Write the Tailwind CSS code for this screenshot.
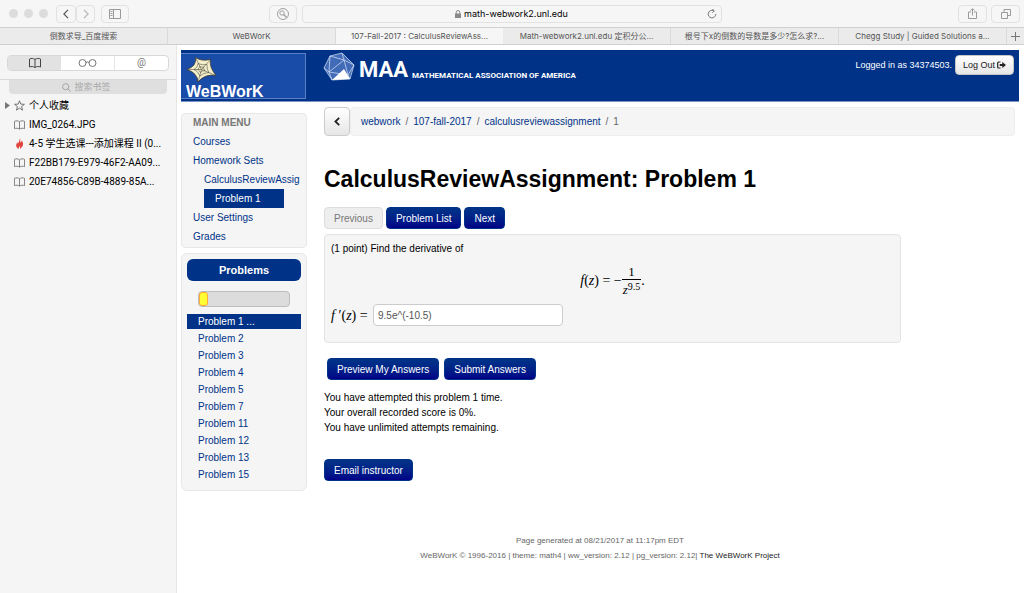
<!DOCTYPE html>
<html lang="en">
<head>
    <meta charset="UTF-8">
    <meta name="viewport" content="width=device-width, initial-scale=1.0">
    <title>CalculusReviewAssignment: Problem 1</title>
    <script src="https://cdn.jsdelivr.net/npm/@tailwindcss/browser@4"></script>
</head>
<body class="flex flex-col min-h-screen bg-white text-black text-[11px] leading-[15px] font-['Liberation_Sans','Noto_Sans_CJK_SC',sans-serif]">
    <!-- Browser toolbar -->
    <header class="flex items-center h-7 bg-[#f6f6f6] border-b border-[#d0d0d0] font-['Inter','Noto_Sans_CJK_SC',sans-serif]">
        <div class="flex gap-[6px] ml-[9px]">
            <span class="size-[9px] rounded-full bg-[#dcdcdc]"></span>
            <span class="size-[9px] rounded-full bg-[#dcdcdc]"></span>
            <span class="size-[9px] rounded-full bg-[#dcdcdc]"></span>
        </div>
        <div class="flex ml-2">
            <button type="button" aria-label="Back" class="flex items-center justify-center w-5 h-[18px] rounded border border-[#e2e2e2]">
                <svg class="w-[6px] h-[10px]" viewBox="0 0 6 10" fill="none" stroke="#555" stroke-width="1.2"><path d="M5 .8.9 5 5 9.2"/></svg>
            </button>
            <button type="button" aria-label="Forward" class="flex items-center justify-center w-[19px] h-[18px] rounded border border-[#e2e2e2]">
                <svg class="w-[6px] h-[10px]" viewBox="0 0 6 10" fill="none" stroke="#b5b5b5" stroke-width="1.2"><path d="M1 .8 5.1 5 1 9.2"/></svg>
            </button>
        </div>
        <button type="button" aria-label="Sidebar" class="flex items-center justify-center w-7 h-[18px] ml-[6px] rounded border border-[#e2e2e2]">
            <svg class="w-3 h-[10px]" viewBox="0 0 12 10" fill="none" stroke="#9a9a9a"><path d="M.5.5h11v9H.5zM4.5.5v9M1.5 2.5h2M1.5 4.5h2M1.5 6.5h2"/></svg>
        </button>
        <div class="flex flex-1 justify-center">
            <button type="button" aria-label="Find" class="flex items-center justify-center w-7 h-[18px] ml-[60px] mr-[5px] rounded border border-[#e2e2e2]">
                <svg class="size-3" viewBox="0 0 12 12" fill="none" stroke="#a0a0a0"><circle cx="6" cy="6" r="5.5"/><circle cx="5" cy="5" r="2.2"/><path d="m6.6 6.6 3 3" stroke-width="1.4"/></svg>
            </button>
            <div class="relative flex items-center justify-center w-[420px] h-[18px] rounded border border-[#e2e2e2]">
                <svg class="w-[6px] h-2 mr-[3px]" viewBox="0 0 6 8"><path d="M0 3.5h6V8H0z" fill="#8a8a8a"/><path d="M1.2 4V2.3a1.8 1.8 0 0 1 3.6 0V4" fill="none" stroke="#8a8a8a"/></svg>
                <span class="text-[9px]">math-webwork2.unl.edu</span>
                <button type="button" aria-label="Reload" class="absolute right-1 top-[3px]">
                    <svg class="size-[10px]" viewBox="0 0 10 10" fill="none" stroke="#777"><path d="M8.8 5A3.8 3.8 0 1 1 6.5 1.6"/><path d="M5.2 0 7.3 1.8 5.4 3.8"/></svg>
                </button>
            </div>
        </div>
        <div class="flex gap-1 ml-[157px] mr-1">
            <button type="button" aria-label="Share" class="flex items-center justify-center w-[29px] h-[18px] rounded border border-[#e2e2e2]">
                <svg class="w-[9px] h-[11px]" viewBox="0 0 9 11" fill="none" stroke="#9a9a9a"><path d="M3 4H.5v6.5h8V4H6M4.500 7.500V.8M2.500 2.700l2-2 2 2"/></svg>
            </button>
            <button type="button" aria-label="Tabs" class="flex items-center justify-center w-[29px] h-[18px] rounded border border-[#e2e2e2]">
                <svg class="w-[10px] h-[10px]" viewBox="0 0 10 10" fill="none" stroke="#9a9a9a"><path d="M.5 3.500h6v6h-6zM3 3V.5h6.500v6H7"/></svg>
            </button>
        </div>
    </header>

    <!-- Tabs -->
    <nav class="flex h-[17px] bg-[#ebebeb] border-b border-[#cfcfcf] text-[8px] leading-4 text-center text-[#555] font-['Inter','Noto_Sans_CJK_SC',sans-serif]">
        <a href="#" class="flex-1 border-r border-[#dadada]">倒数求导_百度搜索</a>
        <a href="#" class="flex-1 border-r border-[#dadada]">WeBWorK</a>
        <a href="#" class="flex-1 bg-[#f6f6f6]">107-Fall-2017 : CalculusReviewAss...</a>
        <a href="#" class="flex-1 border-r border-[#dadada]">Math-webwork2.unl.edu 定积分公...</a>
        <a href="#" class="flex-1 border-r border-[#dadada]">根号下x的倒数的导数是多少?怎么求?...</a>
        <a href="#" class="flex-1 border-r border-[#dadada]">Chegg Study | Guided Solutions a...</a>
        <button type="button" aria-label="New tab" class="flex items-center justify-center w-[17px]">
            <svg class="size-[9px]" viewBox="0 0 9 9" stroke="#777"><path d="M4.500 0v9M0 4.500h9"/></svg>
        </button>
    </nav>

    <div class="flex flex-1">
        <!-- Bookmarks -->
        <aside class="w-[177px] shrink-0 bg-[#f5f5f5] border-r border-[#e6e6e6] font-['Roboto','Noto_Sans_CJK_SC',sans-serif]">
            <div class="h-[35px] pt-[10px] px-[7px] border-b border-[#d9d9d9]">
                <div class="flex h-4 rounded border border-[#d8d8d8] bg-white overflow-hidden">
                    <button type="button" aria-label="Bookmarks" class="flex flex-1 items-center justify-center bg-[#e2e2e2]">
                        <svg class="w-3 h-[10px]" viewBox="0 0 12 10" fill="none" stroke="#444"><path d="M6 1.500C4.500.2 2 .2.500 1v8c1.500-.7 4-.7 5.500.5C7.500 8.300 10 8.300 11.500 9V1C10 .2 7.500.2 6 1.500v8"/></svg>
                    </button>
                    <button type="button" aria-label="Reading list" class="flex flex-1 items-center justify-center">
                        <svg class="w-[19px] h-2" viewBox="0 0 19 8" fill="none" stroke="#777"><circle cx="4.500" cy="4" r="3.500"/><circle cx="14.500" cy="4" r="3.500"/><path d="M8 3.500q1.500-1.200 3 0"/></svg>
                    </button>
                    <button type="button" aria-label="Shared links" class="flex-1 border-l border-[#e6e6e6] text-[10px] leading-3 text-[#777]">@</button>
                </div>
            </div>
            <div class="flex items-center justify-center h-[14px] mx-[9px] rounded-b bg-[#dfdfdf]">
                <svg class="size-[9px] mr-1 shrink-0" viewBox="0 0 9 9" fill="none" stroke="#a5a5a5"><circle cx="3.700" cy="3.700" r="3.100"/><path d="m6 6 2.700 2.700"/></svg>
                <input type="text" aria-label="搜索书签" placeholder="搜索书签" class="w-10 h-[14px] text-[9px] placeholder:text-[#aaa]">
            </div>
            <ul class="mt-[2px] text-[10px] leading-[19px] whitespace-nowrap">
                <li class="flex items-center h-[19px] pl-[5px]">
                    <svg class="w-[5px] h-[7px] mr-1" viewBox="0 0 5 7" fill="#777"><path d="M0 0v7l5-3.500z"/></svg>
                    <svg class="size-[11px] mr-1" viewBox="0 0 11 11" fill="none" stroke="#555" stroke-width=".8"><path d="m5.500.8 1.300 3.300 3.600.2-2.800 2.300.9 3.500-3-2-3 2 .9-3.500L.6 4.300l3.600-.2z"/></svg>
                    <a href="#">个人收藏</a>
                </li>
                <li class="flex items-center h-[19px] pl-[14px]">
                    <svg class="w-[11px] h-[10px] mr-1" viewBox="0 0 12 10" fill="none" stroke="#777"><path d="M6 1.500C4.500.2 2 .2.500 1v8c1.500-.7 4-.7 5.500.5C7.500 8.300 10 8.300 11.500 9V1C10 .2 7.500.2 6 1.500v8"/></svg>
                    <a href="#">IMG_0264.JPG</a>
                </li>
                <li class="flex items-center h-[19px] pl-[14px]">
                    <svg class="w-[11px] h-[11px] mr-1" viewBox="0 0 11 11" fill="#e0443e"><path d="M6 0c.7 2-.3 3 .6 4.600C7.600 4.200 7.500 3.200 7.400 2.600 9.200 4.200 9.500 6 8.800 7.600 8.200 9.300 6.800 10 6 11c0-1.500.2-2-.4-3-.6 1.300-1 1.600-.8 3C3 10.200 1.800 8.700 2.200 6.800 2.400 5.800 3 5 3.200 4.200c.5.500.6 1 .6 1.600C5 4 5.700 2 6 0z"/></svg>
                    <a href="#">4-5 学生选课---添加课程 II (0...</a>
                </li>
                <li class="flex items-center h-[19px] pl-[14px]">
                    <svg class="w-[11px] h-[10px] mr-1" viewBox="0 0 12 10" fill="none" stroke="#777"><path d="M6 1.500C4.500.2 2 .2.500 1v8c1.500-.7 4-.7 5.500.5C7.500 8.300 10 8.300 11.500 9V1C10 .2 7.500.2 6 1.500v8"/></svg>
                    <a href="#">F22BB179-E979-46F2-AA09...</a>
                </li>
                <li class="flex items-center h-[19px] pl-[14px]">
                    <svg class="w-[11px] h-[10px] mr-1" viewBox="0 0 12 10" fill="none" stroke="#777"><path d="M6 1.500C4.500.2 2 .2.500 1v8c1.500-.7 4-.7 5.500.5C7.500 8.300 10 8.300 11.500 9V1C10 .2 7.500.2 6 1.500v8"/></svg>
                    <a href="#">20E74856-C89B-4889-85A...</a>
                </li>
            </ul>
        </aside>

        <!-- WeBWorK page -->
        <div class="flex-1 min-w-0 pl-1 pr-[5px] pt-[5px]">
            <div class="flex h-[52px] bg-[#038] border-b border-[#7b93c4] text-white">
                <a href="#" class="flex flex-col w-[125px] h-[46px] mt-[3px] pl-[5px] bg-[#194ba9] border border-l-0 border-[#5c80c4]">
                    <svg class="w-[34px] h-7 mt-[2px] shrink-0" viewBox="0 0 34 28" fill="#f3eecb" stroke="#3c3a30" stroke-width=".8"><path d="M9.500 1.500Q15 5.500 24.500 3.500 23 11 30 19.500 19 17.500 12 26 11.500 17 1 13.500 11 10 9.500 1.500z"/><path d="m9.500 1.500 6 12 9-10M1 13.500h14.500l14.500 6M15.500 13.500 12 26M12 7.500q4 2 9 1-.5 5 2 8-5.500 0-9 3.500Q12 15 8 13.500q4-2 4-6zM13.500 10.500q2 1 4 .5 0 2 1.500 3.500-2.600 0-4.500 2-1-2-3-3 2-1 2-3z" fill="none" stroke-width=".5"/></svg>
                    <span class="text-[16px] leading-[16px] font-bold">WeBWorK</span>
                </a>
                <a href="#" class="flex h-9 ml-[17px]">
                    <svg class="w-[32px] h-[30px] mt-[2px]" viewBox="0 0 32 30" fill="#426bb7" stroke="#c7d5f0" stroke-width=".8"><path d="M1 16 7 4l12-3 12 12-4 14-18 1z"/><path d="M7 4l-1 16-5-4M7 4l14 4-2-7M21 8l10 5-6 10L21 8 6 20l3 8M6 20l19 3 2 4" fill="none"/><path d="m9 28 12-11 6 10z" fill="#fff" stroke="none"/></svg>
                    <span class="ml-1 mt-[5px] text-[22px] leading-[30px] font-bold font-['Roboto',sans-serif]">MAA</span>
                    <span class="ml-1 mt-[19px] text-[8px] leading-[14px] font-bold font-['Roboto',sans-serif]">MATHEMATICAL ASSOCIATION OF AMERICA</span>
                </a>
                <div class="flex items-start ml-auto mr-[5px] pt-[5px] text-[9px]">
                    <span class="mr-[3px] mt-[3px]">Logged in as 34374503.</span>
                    <button type="button" class="flex items-center h-5 px-[7px] rounded-sm border border-[#c5c5c5] bg-linear-to-b from-white to-[#e6e6e6] text-[#222]">Log Out
                        <svg class="w-[9px] h-2 ml-[2px]" viewBox="0 0 9 8"><path d="M3.500 1H1.500Q.7 1 .7 2v4q0 1 .8 1h2" fill="none" stroke="#222" stroke-width="1.200"/><path d="M2.700 2.900h2.600V.9L9 4 5.300 7.100v-2H2.700z" fill="#222"/></svg>
                    </button>
                </div>
            </div>

            <div class="flex">
                <div class="w-[126px] shrink-0 pt-[11px] text-[10px] text-[#038]">
                    <nav class="h-[135px] pl-[11px] rounded-sm border border-[#e8e8e8] bg-[#f5f5f5] leading-[19px] overflow-hidden">
                        <h2 class="leading-[18px] font-bold text-[#777]">MAIN MENU</h2>
                        <ul>
                            <li><a href="#">Courses</a></li>
                            <li><a href="#">Homework Sets</a>
                                <ul class="pl-[11px]">
                                    <li><a href="#">CalculusReviewAssig</a></li>
                                    <li><a href="#" class="block w-20 pl-[11px] bg-[#038] text-white">Problem 1</a></li>
                                </ul>
                            </li>
                            <li><a href="#">User Settings</a></li>
                            <li><a href="#">Grades</a></li>
                        </ul>
                    </nav>
                    <div class="mt-[5px] px-[5px] pt-[5px] pb-[7px] rounded-md border border-[#e8e8e8] bg-[#f5f5f5]">
                        <h2 class="h-[22px] rounded-md bg-[#038] text-[11px] leading-[22px] font-bold text-center text-white">Problems</h2>
                        <div class="h-4 mt-[10px] mx-[11px] rounded border border-[#bdbdbd] bg-[#dcdcdc]">
                            <div class="w-[9px] h-[14px] rounded-[3px] border border-[#fa3] bg-[#ff3]"></div>
                        </div>
                        <ul class="mt-[7px] leading-[17px]">
                            <li><a href="#" class="block h-[15px] pl-[11px] leading-[15px] mb-[1px] bg-[#038] text-white">Problem 1 ...</a></li>
                            <li class="pl-[11px]"><a href="#">Problem 2</a></li>
                            <li class="pl-[11px]"><a href="#">Problem 3</a></li>
                            <li class="pl-[11px]"><a href="#">Problem 4</a></li>
                            <li class="pl-[11px]"><a href="#">Problem 5</a></li>
                            <li class="pl-[11px]"><a href="#">Problem 7</a></li>
                            <li class="pl-[11px]"><a href="#">Problem 11</a></li>
                            <li class="pl-[11px]"><a href="#">Problem 12</a></li>
                            <li class="pl-[11px]"><a href="#">Problem 13</a></li>
                            <li class="pl-[11px]"><a href="#">Problem 15</a></li>
                        </ul>
                    </div>
                </div>

                <main class="flex-1 min-w-0 ml-[17px] mr-1 pt-[5px] text-[10px]">
                    <div class="flex">
                        <a href="#" aria-label="Up" class="flex items-center justify-center w-[26px] h-[29px] rounded-sm border border-[#ccc] bg-linear-to-b from-white to-[#e6e6e6]">
                            <svg class="w-[6px] h-[9px]" viewBox="0 0 6 9" fill="none" stroke="#222" stroke-width="1.800"><path d="M5.200.8 1.400 4.500l3.800 3.700"/></svg>
                        </a>
                        <div class="flex flex-1 items-center gap-[5px] h-[29px] pl-[10px] rounded-sm border border-[#eee] bg-[#f5f5f5] text-[#666]">
                            <a href="#" class="text-[#038]">webwork</a><span>/</span>
                            <a href="#" class="text-[#038]">107-fall-2017</a><span>/</span>
                            <a href="#" class="text-[#038]">calculusreviewassignment</a><span>/</span>
                            <span>1</span>
                        </div>
                    </div>
                    <h1 class="mt-7 text-[23px] leading-[30px] font-bold">CalculusReviewAssignment: Problem 1</h1>
                    <div class="flex gap-[3px] mt-[13px]">
                        <button type="button" disabled class="h-[22px] px-[9px] rounded-sm border border-[#ddd] bg-[#eee] text-[#777]">Previous</button>
                        <button type="button" class="h-[22px] px-[9px] rounded-sm border border-[#038] bg-linear-to-b from-[#038] to-[#008] text-white">Problem List</button>
                        <button type="button" class="h-[22px] px-[9px] rounded-sm border border-[#038] bg-linear-to-b from-[#038] to-[#008] text-white">Next</button>
                    </div>

                    <form>
                        <div class="max-w-[577px] mt-[5px] px-[6px] pt-[6px] pb-4 rounded-sm border border-[#e3e3e3] bg-[#f5f5f5]">
                            <p>(1 point) Find the derivative of</p>
                            <div class="flex items-center justify-center h-12 text-[14px] font-['Liberation_Serif',serif]">
                                <span><i>f</i>(<i>z</i>) = −</span>
                                <span class="flex flex-col items-center text-[13px] leading-[15px]">
                                    <span>1</span>
                                    <span class="flex h-[18px] pt-[2px] px-[1px] border-t border-black"><i>z</i><span class="text-[10px] leading-[10px]">9.5</span></span>
                                </span>
                                <span>.</span>
                            </div>
                            <div class="flex items-center">
                                <label for="answer" class="w-[42px] text-[14px] whitespace-nowrap font-['Liberation_Serif',serif]"><i>f</i> ′(<i>z</i>) =</label>
                                <input id="answer" type="text" value="9.5e^(-10.5)" class="w-[190px] h-[22px] px-1 rounded-sm border border-[#ccc] bg-white text-[#555]">
                            </div>
                        </div>
                        <div class="flex gap-[5px] mt-[15px] ml-[3px]">
                            <button type="button" class="h-[22px] px-[9px] rounded-sm border border-[#038] bg-linear-to-b from-[#038] to-[#008] text-white">Preview My Answers</button>
                            <button type="button" class="h-[22px] px-[9px] rounded-sm border border-[#038] bg-linear-to-b from-[#038] to-[#008] text-white">Submit Answers</button>
                        </div>
                    </form>
                    <p class="mt-[10px]">You have attempted this problem 1 time.<br>Your overall recorded score is 0%.<br>You have unlimited attempts remaining.</p>
                    <button type="button" class="h-[22px] mt-6 px-[9px] rounded-sm border border-[#038] bg-linear-to-b from-[#038] to-[#008] text-white">Email instructor</button>
                </main>
            </div>

            <footer class="mt-[42px] text-center text-[8px] text-[#666]">
                <p>Page generated at 08/21/2017 at 11:17pm EDT</p>
                <p>WeBWorK © 1996-2016 | theme: math4 | ww_version: 2.12 | pg_version: 2.12| <a href="#" class="text-[#222]">The WeBWorK Project</a></p>
            </footer>
        </div>
    </div>
</body>
</html>
